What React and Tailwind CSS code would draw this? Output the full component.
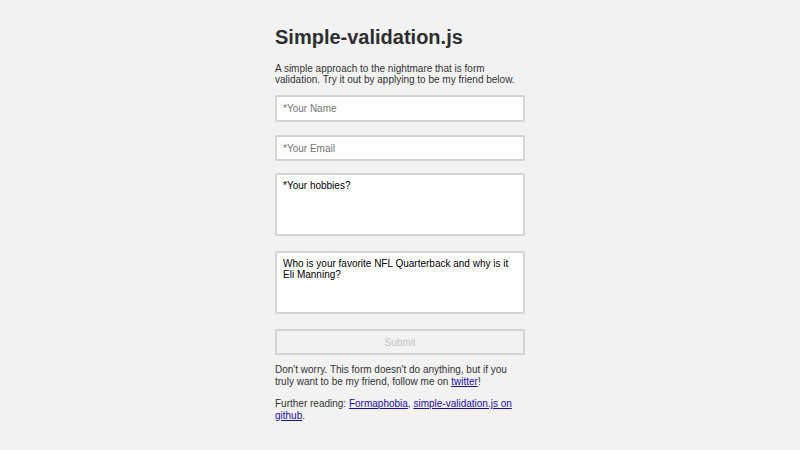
import React from 'react';

const fieldClass =
  'block w-full border-2 border-[#d4d4d4] rounded-[2px] bg-white px-[6px] text-[10px] text-black placeholder:text-[#757575] outline-none';

export default function App() {
  return (
    <div className="min-h-[450px] w-full bg-[#f2f2f2] font-['Liberation_Sans',Arial,sans-serif] text-[#333]">
      <div className="mx-auto w-[250px] pt-[25px]">
        <h1 className="text-[20px] font-bold leading-[24px] text-[#2e2e2e]">Simple-validation.js</h1>

        <p className="mt-[14px] text-[10px] leading-[11px]">
          A simple approach to the nightmare that is form validation. Try it out by applying to be my friend below.
        </p>

        <form className="mt-[10px] flex flex-col" onSubmit={(e) => e.preventDefault()}>
          <input className={`${fieldClass} h-[27px]`} placeholder="*Your Name" />
          <input className={`${fieldClass} mt-[13px] h-[26px]`} placeholder="*Your Email" />
          <textarea
            className={`${fieldClass} mt-[12px] h-[63px] resize-none pt-[5px] leading-[11px]`}
            defaultValue="*Your hobbies?"
          />
          <textarea
            className={`${fieldClass} mt-[15px] h-[63px] resize-none pt-[5px] leading-[11px]`}
            defaultValue="Who is your favorite NFL Quarterback and why is it Eli Manning?"
          />
          <button
            type="submit"
            disabled
            className="mt-[15px] h-[26px] w-full rounded-[2px] border-2 border-[#d4d4d4] bg-[#f2f2f2] text-[10px] text-[#c4c4c4]"
          >
            Submit
          </button>
        </form>

        <p className="mt-[9px] text-[10px] leading-[12px]">
          Don't worry. This form doesn't do anything, but if you truly want to be my friend, follow me on{' '}
          <a href="#" className="text-[#1a0dab] underline">twitter</a>!
        </p>
        <p className="mt-[10px] text-[10px] leading-[11.5px]">
          Further reading: <a href="#" className="text-[#1a0dab] underline">Formaphobia</a>,{' '}
          <a href="#" className="text-[#1a0dab] underline">simple-validation.js on github</a>.
        </p>
      </div>
    </div>
  );
}
